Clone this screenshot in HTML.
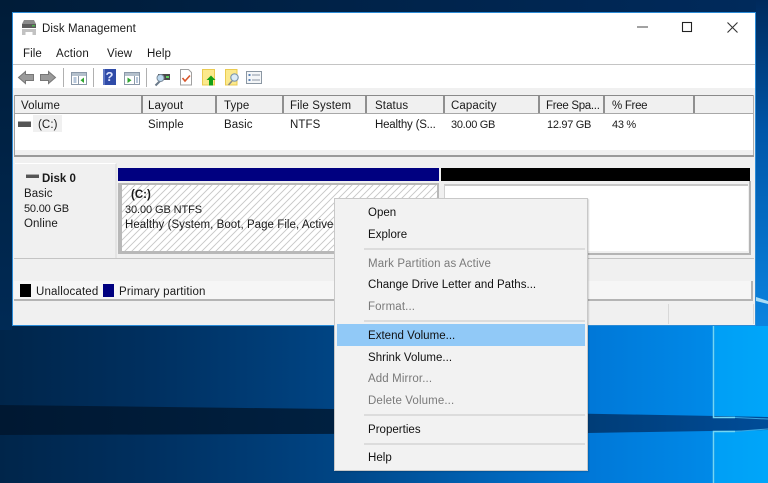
<!DOCTYPE html>
<html><head><meta charset="utf-8"><style>
html,body{margin:0;padding:0}
body{width:768px;height:483px;overflow:hidden;position:relative;font:11.5px/16px "Liberation Sans",sans-serif;color:#1a1a1a;background:#013a70}
#w{position:absolute;left:0;top:0;width:768px;height:483px;filter:blur(.25px)}
.a{position:absolute}
.t{position:absolute;white-space:nowrap;letter-spacing:.1px;margin-top:1px}
.n{font-size:11px;letter-spacing:-.3px}
.h{position:absolute;top:96px;height:17px;border-right:2px solid #8f8f8f;box-sizing:border-box}
.m{position:absolute;left:368px;white-space:nowrap;letter-spacing:.02px;color:#111;margin-top:1px}
.d{color:#7a7a7a;letter-spacing:.12px}
.s{position:absolute;left:364px;width:221px;height:2px;background:#dcdcdc}
</style></head><body><div id="w">
<svg class="a" style="left:0;top:0" width="768" height="483">
<defs>
<linearGradient id="g" x1="0" y1="0" x2="1" y2="0"><stop offset="0" stop-color="#00254a"/><stop offset=".2" stop-color="#003060"/><stop offset=".44" stop-color="#004585"/><stop offset=".77" stop-color="#0078d8"/><stop offset=".93" stop-color="#008ae8"/><stop offset=".931" stop-color="#009ff5"/><stop offset="1" stop-color="#00a6fa"/></linearGradient>
<linearGradient id="t" x1="0" y1="0" x2="1" y2="0"><stop offset="0" stop-color="#001c38"/><stop offset="1" stop-color="#002a5c"/></linearGradient>
<linearGradient id="r" x1="0" y1="0" x2="0" y2="1"><stop offset="0" stop-color="#002a5c"/><stop offset=".4" stop-color="#0056a8"/><stop offset="1" stop-color="#0a84e0"/></linearGradient>
<linearGradient id="l" x1="0" y1="0" x2="0" y2="1"><stop offset="0" stop-color="#001c38"/><stop offset="1" stop-color="#002a55"/></linearGradient>
<linearGradient id="b" x1="0" y1="0" x2="1" y2="0"><stop offset="0" stop-color="#001832"/><stop offset=".44" stop-color="#002040"/><stop offset=".77" stop-color="#003d78"/><stop offset="1" stop-color="#004c98"/></linearGradient>
</defs>
<rect width="768" height="483" fill="url(#g)"/>
<rect width="768" height="12" fill="url(#t)"/>
<rect x="756" y="0" width="12" height="326" fill="url(#r)"/>
<rect x="0" y="0" width="12" height="330" fill="url(#l)"/>
<path d="M0 405L334 409L768 417V430L588 433L0 435Z" fill="url(#b)"/>
<path d="M713.500 326V417.500H735M713.500 483V431.500H735" fill="none" stroke="#74d6f2" stroke-width="1.500"/>
<path d="M735 417.500L768 419M735 431.500L768 429" fill="none" stroke="#3aa6e0" stroke-width="1"/>
<path d="M756 297L768 301V304L756 301Z" fill="#a8dcf6"/>
</svg>

<div class="a" style="left:12px;top:12px;width:744px;height:314px;box-sizing:border-box;border:1px solid #2b8bd6;background:#f0f0f0"></div>
<div class="a" style="left:13px;top:13px;width:742px;height:51px;background:#fff"></div>
<div class="a" style="left:13px;top:64px;width:742px;height:1px;background:#c4c4c4"></div>
<div class="a" style="left:13px;top:65px;width:742px;height:23px;background:#fff"></div>

<svg class="a" style="left:20px;top:19px" width="18" height="17"><path d="M4 1H14L16 5V9H2V5Z" fill="#8b8b8b"/><rect x="2" y="5" width="14" height="4" fill="#5c5c5c"/><rect x="12" y="6" width="3" height="1.500" fill="#4fb04f"/><path d="M2 10H16V16H12.500V13H5.500V16H2Z" fill="#c2c2c2"/></svg>
<div class="t" style="left:42px;top:20px;letter-spacing:.08px">Disk Management</div>
<div class="t" style="left:23px;top:45px">File</div>
<div class="t" style="left:56px;top:45px;letter-spacing:.15px">Action</div>
<div class="t" style="left:107px;top:45px">View</div>
<div class="t" style="left:147px;top:45px">Help</div>

<svg class="a" style="left:0;top:0" width="768" height="100" fill="none">
<path d="M637 27H648" stroke="#555" stroke-width="1.100"/>
<rect x="682.500" y="22.500" width="9" height="9" stroke="#222" stroke-width="1.100"/>
<path d="M727.500 22.500L737.500 32.500M737.500 22.500L727.500 32.500" stroke="#333" stroke-width="1.100"/>

<path d="M18.500 77.500L25.500 71.500V74.500H33.500V80.500H25.500V83.500Z" fill="#9a9a9a" stroke="#777"/>
<path d="M55.500 77.500L48.500 71.500V74.500H40.500V80.500H48.500V83.500Z" fill="#9a9a9a" stroke="#777"/>
<rect x="63" y="68" width="1" height="19" fill="#b0b0b0"/>

<rect x="71.500" y="72.500" width="15" height="12" fill="#fff" stroke="#8a98a8"/><rect x="72" y="73" width="14" height="3" fill="#b4c0cc"/><path d="M78.500 76V84" stroke="#8a98a8"/><path d="M73.500 78H76.500M73.500 80H76.500M73.500 82H76.500" stroke="#6d8db5"/><path d="M84 77.500V83L80.500 80.200Z" fill="#2fa52f"/>
<rect x="93" y="68" width="1" height="19" fill="#b0b0b0"/>

<rect x="103" y="69" width="13" height="16" fill="#2f4ba8"/><rect x="103" y="69" width="2" height="16" fill="#6078c4"/>
<rect x="124.500" y="72.500" width="15" height="12" fill="#fff" stroke="#8a98a8"/><rect x="125" y="73" width="14" height="3" fill="#b4c0cc"/><path d="M134.500 76V84" stroke="#8a98a8"/><path d="M136 78H138M136 80H138M136 82H138" stroke="#6d8db5"/><path d="M127.500 77.500V83L131.500 80.200Z" fill="#2fa52f"/>
<rect x="146" y="68" width="1" height="19" fill="#b0b0b0"/>

<path d="M155.500 85.500L160.500 80.500" stroke="#6b7a8a" stroke-width="2"/><rect x="158" y="74" width="12" height="6" fill="#4a4a4a"/><rect x="166" y="76" width="3" height="2" fill="#5fd05f"/><circle cx="160.500" cy="78" r="3.500" fill="#bcd8ee" stroke="#7b8b9b"/>
<path d="M180.500 69.500H188.500L191.500 72.500V85H180.500Z" fill="#fff" stroke="#a0a0a0"/><path d="M182.500 78L185 81L190 75.500" stroke="#d8562a" stroke-width="1.600"/>

<rect x="202.500" y="69.500" width="12" height="15.500" fill="#fbe98c" stroke="#ebcb50"/><path d="M211 75.500L215.500 80H213V85.500H209V80H206.500Z" fill="#14a014"/>
<rect x="225.500" y="69.500" width="11.500" height="15.500" fill="#fbe98c" stroke="#ebcb50"/><path d="M232 81L228.500 85" stroke="#8a8a8a" stroke-width="1.600"/><circle cx="234.500" cy="77.500" r="3.700" fill="#dcecf7" stroke="#7d97ad" stroke-width="1.200"/>
<rect x="246.500" y="71.500" width="15" height="12" fill="#f4f6f8" stroke="#8b97a3"/><rect x="248.500" y="74" width="2" height="2" fill="#5b82b5"/><rect x="248.500" y="79" width="2" height="2" fill="#5b82b5"/><path d="M252 75H260M252 80H260" stroke="#8b97a3"/>
</svg>
<div class="a" style="left:103px;top:69px;width:13px;text-align:center;font:bold 13px/16px 'Liberation Sans',sans-serif;color:#dfe6ff">?</div>

<!-- list -->
<div class="a" style="left:14px;top:95px;width:740px;height:1px;background:#8a8a8a"></div>
<div class="a" style="left:14px;top:95px;width:1px;height:60px;background:#a0a0a0"></div>
<div class="a" style="left:753px;top:95px;width:1px;height:60px;background:#b0b0b0"></div>
<div class="a" style="left:15px;top:96px;width:738px;height:17px;background:#f0f0f0"></div>
<div class="a" style="left:15px;top:113px;width:738px;height:1px;background:#a8a8a8"></div>
<div class="a" style="left:15px;top:114px;width:738px;height:36px;background:#fff"></div>
<div class="h" style="left:15px;width:128px"></div>
<div class="h" style="left:143px;width:74px"></div>
<div class="h" style="left:217px;width:67px"></div>
<div class="h" style="left:284px;width:83px"></div>
<div class="h" style="left:367px;width:78px"></div>
<div class="h" style="left:445px;width:95px"></div>
<div class="h" style="left:540px;width:65px"></div>
<div class="h" style="left:605px;width:90px"></div>
<div class="t" style="left:21px;top:97px">Volume</div>
<div class="t" style="left:148px;top:97px">Layout</div>
<div class="t" style="left:224px;top:97px">Type</div>
<div class="t" style="left:290px;top:97px">File System</div>
<div class="t" style="left:375px;top:97px">Status</div>
<div class="t" style="left:451px;top:97px">Capacity</div>
<div class="t" style="left:546px;top:97px;letter-spacing:-.3px">Free Spa...</div>
<div class="t" style="left:612px;top:97px;letter-spacing:-.3px">% Free</div>
<div class="a" style="left:33px;top:115px;width:29px;height:17px;background:#f0f0f0"></div>
<div class="a" style="left:18px;top:121px;width:13px;height:5px;background:#555;border-top:1px solid #aaa"></div>
<div class="t" style="left:38px;top:116px">(C:)</div>
<div class="t" style="left:148px;top:116px">Simple</div>
<div class="t" style="left:224px;top:116px">Basic</div>
<div class="t" style="left:290px;top:116px">NTFS</div>
<div class="t" style="left:375px;top:116px;letter-spacing:-.2px">Healthy (S...</div>
<div class="t n" style="left:451px;top:116px">30.00 GB</div>
<div class="t n" style="left:547px;top:116px">12.97 GB</div>
<div class="t n" style="left:612px;top:116px">43 %</div>
<div class="a" style="left:14px;top:155px;width:740px;height:2px;background:#9a9a9a"></div>

<!-- disk -->
<div class="a" style="left:15px;top:163px;width:102px;height:96px;background:#f0f0f0;box-sizing:border-box;border-right:2px solid #e4e4e4;border-bottom:1px solid #c8c8c8;border-top:1px solid #fff"></div>
<div class="a" style="left:26px;top:174px;width:13px;height:3px;background:#555;border-top:1px solid #aaa"></div>
<div class="t" style="left:42px;top:170px;font-weight:bold;letter-spacing:0">Disk 0</div>
<div class="t" style="left:24px;top:185px">Basic</div>
<div class="t n" style="left:24px;top:200px;letter-spacing:-.2px">50.00 GB</div>
<div class="t" style="left:24px;top:215px">Online</div>
<div class="a" style="left:14px;top:258px;width:740px;height:1px;background:#c4c4c4"></div>

<div class="a" style="left:118px;top:168px;width:321px;height:13px;background:#000080"></div>
<svg class="a" style="left:118px;top:181px" width="321" height="73">
<defs><pattern id="h" width="7" height="7" patternUnits="userSpaceOnUse"><rect width="7" height="7" fill="#fff"/><path d="M-1 8L8 -1M-1 1L1 -1M6 8L8 6" stroke="#c6c6c6" stroke-width=".9"/></pattern></defs>
<rect x="0" y="2" width="321" height="71" fill="#b8b8b8"/><rect x="4" y="4" width="315" height="66" fill="url(#h)"/></svg>

<div class="a" style="left:441px;top:168px;width:309px;height:13px;background:#000"></div>
<div class="a" style="left:441px;top:181px;width:310px;height:74px;box-sizing:border-box;background:#f0f0f0;border-right:2px solid #b4b4b4;border-bottom:2px solid #b4b4b4"></div>
<div class="a" style="left:444px;top:184px;width:304px;height:67px;box-sizing:border-box;background:#fff;border-top:2px solid #c8c8c8;border-left:1px solid #d0d0d0"></div>
<div class="t" style="left:131px;top:186px;font-weight:bold;letter-spacing:0">(C:)</div>
<div class="t n" style="left:125px;top:201px;letter-spacing:-.1px">30.00 GB NTFS</div>
<div class="t" style="left:125px;top:216px;letter-spacing:.05px">Healthy (System, Boot, Page File, Active,</div>

<!-- legend + status -->
<div class="a" style="left:14px;top:281px;width:739px;height:20px;background:#f6f6f6;border-bottom:2px solid #b4b4b4;border-right:2px solid #b4b4b4;box-sizing:border-box"></div>
<div class="a" style="left:20px;top:284px;width:11px;height:13px;background:#000"></div>
<div class="t" style="left:36px;top:283px;letter-spacing:.15px">Unallocated</div>
<div class="a" style="left:103px;top:284px;width:11px;height:13px;background:#000080"></div>
<div class="t" style="left:119px;top:283px;letter-spacing:.17px">Primary partition</div>
<div class="a" style="left:668px;top:304px;width:1px;height:20px;background:#d8d8d8"></div>
<div class="a" style="left:753px;top:304px;width:1px;height:20px;background:#d8d8d8"></div>

<!-- context menu -->
<div class="a" style="left:334px;top:198px;width:254px;height:273px;box-sizing:border-box;background:#f2f2f2;border:1px solid #c8c8c8;box-shadow:1px 1px 1px rgba(0,0,0,.15)"></div>
<div class="a" style="left:337px;top:324px;width:248px;height:22px;background:#91c9f7"></div>
<div class="s" style="top:248px"></div><div class="s" style="top:320px"></div><div class="s" style="top:414px"></div><div class="s" style="top:443px"></div>
<div class="m" style="top:204px">Open</div>
<div class="m" style="top:226px">Explore</div>
<div class="m d" style="top:255px">Mark Partition as Active</div>
<div class="m" style="top:276px">Change Drive Letter and Paths...</div>
<div class="m d" style="top:298px">Format...</div>
<div class="m" style="top:327px">Extend Volume...</div>
<div class="m" style="top:349px">Shrink Volume...</div>
<div class="m d" style="top:370px">Add Mirror...</div>
<div class="m d" style="top:392px">Delete Volume...</div>
<div class="m" style="top:421px">Properties</div>
<div class="m" style="top:449px">Help</div>
</div></body></html>
